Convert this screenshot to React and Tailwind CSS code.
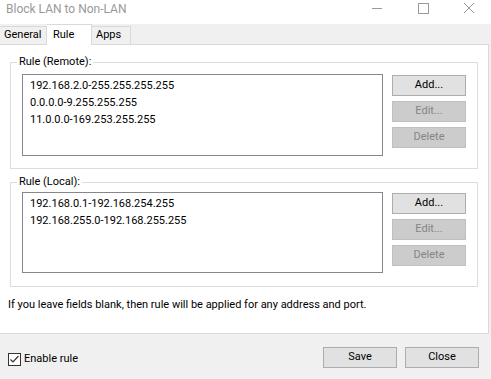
import React from "react";

const font = { fontFamily: 'Roboto, "Noto Sans", sans-serif' };

function Btn({ children, disabled, className = "" }) {
  return (
    <div
      className={
        "flex items-center justify-center h-[21px] w-[74px] text-[11px] border " +
        (disabled
          ? "bg-[#cccccc] border-[#bfbfbf] text-[#858585] "
          : "bg-[#e1e1e1] border-[#adadad] text-black ") +
        className
      }
    >
      {children}
    </div>
  );
}

function Group({ label, lines, className = "", listTop, listH }) {
  return (
    <fieldset className={"mx-[10px] border border-[#dcdcdc] rounded-none " + className}>
      <legend className="ml-[6px] px-[2px] text-[11px] leading-[14px] text-black">{label}</legend>
      <div className={"flex px-[11px] " + listTop}>
        <div className={"w-[361px] border border-[#828790] bg-white pl-[7px] pt-[2px] " + listH}>
          {lines.map((l) => (
            <div key={l} className="text-[11px] leading-[17px] text-black">{l}</div>
          ))}
        </div>
        <div className="ml-[9px] flex flex-col gap-[5px] pt-[1px]">
          <Btn>Add...</Btn>
          <Btn disabled>Edit...</Btn>
          <Btn disabled>Delete</Btn>
        </div>
      </div>
    </fieldset>
  );
}

export default function App() {
  return (
    <div className="w-[491px] h-[379px] bg-[#f0f0f0] flex flex-col overflow-hidden" style={font}>
      {/* Title bar */}
      <div className="h-[24px] bg-white flex items-start relative">
        <div className="pl-[6px] pt-[2px] text-[12px] leading-[14px] text-[#999999]">Block LAN to Non-LAN</div>
        <div className="ml-auto flex items-start">
          <svg width="12" height="16" viewBox="0 0 12 16" className="mr-[34px]">
            <line x1="1" y1="8.5" x2="11" y2="8.5" stroke="#9a9a9a" strokeWidth="1" />
          </svg>
          <svg width="12" height="16" viewBox="0 0 12 16" className="mr-[34px]">
            <rect x="1.5" y="3.5" width="10" height="10" fill="none" stroke="#9a9a9a" strokeWidth="1" />
          </svg>
          <svg width="12" height="16" viewBox="0 0 12 16" className="mr-[16px]">
            <path d="M1 3 L11 13 M11 3 L1 13" stroke="#9a9a9a" strokeWidth="1" />
          </svg>
        </div>
      </div>

      {/* Tabs */}
      <div className="h-[20px] flex items-end text-[11px] text-black">
        <div className="h-[18px] w-[47px] border border-b-0 border-l-0 border-[#d9d9d9] flex items-center pl-[4px]">General</div>
        <div className="h-[21px] w-[45px] bg-white border border-b-0 border-l-0 border-[#d9d9d9] flex items-start pt-[2px] pl-[6px] relative top-[1px]">Rule</div>
        <div className="h-[18px] w-[39px] border border-b-0 border-l-0 border-[#d9d9d9] flex items-center pl-[4px]">Apps</div>
      </div>

      {/* Panel */}
      <div className="w-[489px] h-[290px] bg-white border border-l-0 border-[#d9d9d9] flex flex-col">
        <Group
          label="Rule (Remote):"
          lines={["192.168.2.0-255.255.255.255", "0.0.0.0-9.255.255.255", "11.0.0.0-169.253.255.255"]}
          className="mt-[10px] h-[114px]"
          listTop="pt-[5px]"
          listH="h-[82px]"
        />
        <Group
          label="Rule (Local):"
          lines={["192.168.0.1-192.168.254.255", "192.168.255.0-192.168.255.255"]}
          className="mt-[6px] h-[112px]"
          listTop="pt-[3px]"
          listH="h-[81px]"
        />
        <div className="mt-[10px] pl-[8px] text-[11px] leading-[16px] text-black">
          If you leave fields blank, then rule will be applied for any address and port.
        </div>
      </div>

      {/* Bottom */}
      <div className="flex items-center pt-[13px]">
        <div className="ml-[8px] mt-[4px] w-[13px] h-[13px] border border-[#333333] bg-white flex items-center justify-center">
          <svg width="11" height="11" viewBox="0 0 11 11">
            <path d="M1.5 5.5 L4 8 L9.5 2" fill="none" stroke="#333333" strokeWidth="1.2" />
          </svg>
        </div>
        <div className="ml-[3px] mt-[3px] text-[11px] text-black">Enable rule</div>
        <div className="ml-auto flex gap-[8px] mr-[12px]">
          <Btn>Save</Btn>
          <Btn>Close</Btn>
        </div>
      </div>
    </div>
  );
}
